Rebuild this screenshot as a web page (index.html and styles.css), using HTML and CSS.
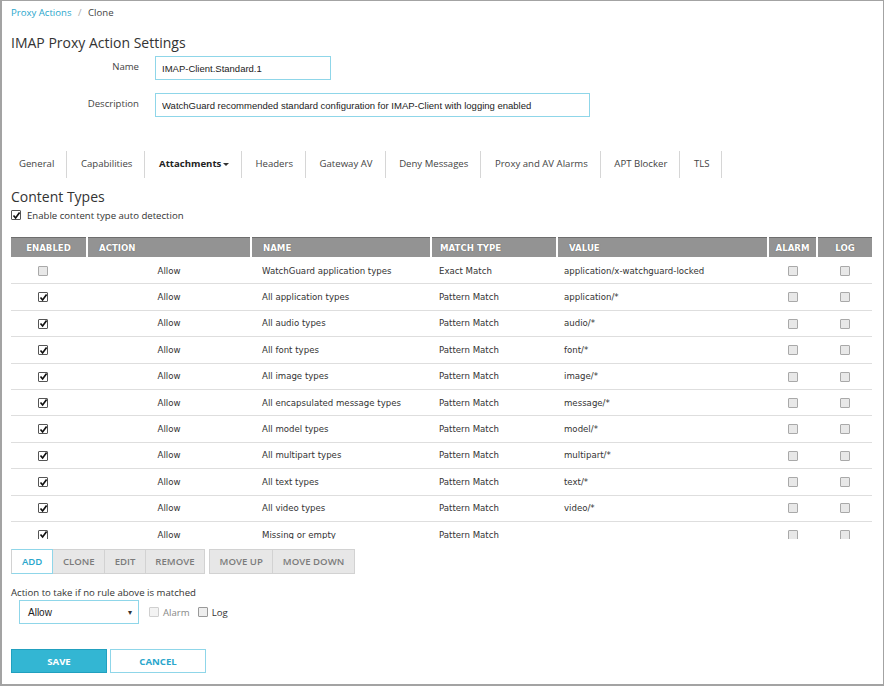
FILE: index.html
```html
<!DOCTYPE html>
<html lang="en">
<head>
    <meta charset="UTF-8">
    <title>IMAP Proxy Action Settings</title>
    <link rel="stylesheet" href="styles.css">
</head>
<body>
    <div class="page">
        <div class="crumbs">
            <a href="#">Proxy Actions</a>
            <span class="sep">/</span>
            <span>Clone</span>
        </div>

        <h1>IMAP Proxy Action Settings</h1>

        <div class="form-row">
            <label for="name">Name</label>
            <input type="text" id="name" class="name-input" value="IMAP-Client.Standard.1">
        </div>
        <div class="form-row">
            <label for="desc">Description</label>
            <input type="text" id="desc" class="desc-input" value="WatchGuard recommended standard configuration for IMAP-Client with logging enabled">
        </div>

        <ul class="tabs">
            <li>General</li>
            <li>Capabilities</li>
            <li class="active">Attachments <span class="caret"></span></li>
            <li>Headers</li>
            <li>Gateway AV</li>
            <li>Deny Messages</li>
            <li>Proxy and AV Alarms</li>
            <li>APT Blocker</li>
            <li>TLS</li>
        </ul>

        <h2>Content Types</h2>
        <div class="check-line">
            <span class="cb on"><svg width="9" height="9" viewBox="0 0 9 9"><path d="M1.5 4.5 L3.6 7 L7.6 1.6" stroke="#111" stroke-width="1.7" fill="none"/></svg></span>
            <span>Enable content type auto detection</span>
        </div>

        <table class="grid head">
            <colgroup>
                <col class="c-en"><col class="c-act"><col class="c-name"><col class="c-match"><col class="c-val"><col class="c-alarm"><col class="c-log">
            </colgroup>
            <tr>
                <th class="center">ENABLED</th>
                <th>ACTION</th>
                <th>NAME</th>
                <th class="pad-s">MATCH TYPE</th>
                <th>VALUE</th>
                <th class="center">ALARM</th>
                <th class="center">LOG</th>
            </tr>
        </table>
        <div class="grid-body">
            <table class="grid" id="rules">
                <colgroup>
                    <col class="c-en"><col class="c-act"><col class="c-name"><col class="c-match"><col class="c-val"><col class="c-alarm"><col class="c-log">
                </colgroup>
            </table>
        </div>

        <div class="toolbar">
            <div class="btn-group">
                <button class="active">ADD</button>
                <button>CLONE</button>
                <button>EDIT</button>
                <button>REMOVE</button>
            </div>
            <div class="btn-group">
                <button>MOVE UP</button>
                <button>MOVE DOWN</button>
            </div>
        </div>

        <div class="default-action">
            <div class="default-label">Action to take if no rule above is matched</div>
            <div class="default-row">
                <div class="select">Allow <span class="arrow">&#9662;</span></div>
                <span class="cb off dim"></span><span class="dim-text">Alarm</span>
                <span class="cb off log-cb"></span><span>Log</span>
            </div>
        </div>

        <div class="actions">
            <button class="save">SAVE</button>
            <button class="cancel">CANCEL</button>
        </div>
    </div>

    <script>
        const rules = [
            [false, 'WatchGuard application types', 'Exact Match', 'application/x-watchguard-locked'],
            [true, 'All application types', 'Pattern Match', 'application/*'],
            [true, 'All audio types', 'Pattern Match', 'audio/*'],
            [true, 'All font types', 'Pattern Match', 'font/*'],
            [true, 'All image types', 'Pattern Match', 'image/*'],
            [true, 'All encapsulated message types', 'Pattern Match', 'message/*'],
            [true, 'All model types', 'Pattern Match', 'model/*'],
            [true, 'All multipart types', 'Pattern Match', 'multipart/*'],
            [true, 'All text types', 'Pattern Match', 'text/*'],
            [true, 'All video types', 'Pattern Match', 'video/*'],
            [true, 'Missing or empty', 'Pattern Match', '']
        ];

        const checked = '<span class="cb on"><svg width="9" height="9" viewBox="0 0 9 9"><path d="M1.5 4.5 L3.6 7 L7.6 1.6" stroke="#111" stroke-width="1.7" fill="none"/></svg></span>';
        const unchecked = '<span class="cb off"></span>';

        const table = document.getElementById('rules');
        rules.forEach(function (r) {
            const row = table.insertRow();
            row.innerHTML =
                '<td class="center en">' + (r[0] ? checked : unchecked) + '</td>' +
                '<td class="center">Allow</td>' +
                '<td>' + r[1] + '</td>' +
                '<td class="pad-s">' + r[2] + '</td>' +
                '<td class="pad-v">' + r[3] + '</td>' +
                '<td class="center">' + unchecked + '</td>' +
                '<td class="center">' + unchecked + '</td>';
        });
    </script>
</body>
</html>
```

FILE: styles.css
```css
body {
    margin: 0;
    font-family: "Open Sans", Arial, sans-serif;
    color: #333;
    background: #fff;
}
.page {
    box-sizing: border-box;
    width: 884px;
    height: 686px;
    border: 1px solid #a3a3a3;
    border-left-width: 2px;
    border-bottom-width: 2px;
    padding: 0 0 0 9px;
    overflow: hidden;
}
.crumbs {
    font-size: 9.6px;
    padding-top: 5px;
    height: 16px;
    color: #444;
}
.crumbs a {
    color: #2aa6cc;
    text-decoration: none;
}
.crumbs .sep {
    color: #aaa;
    margin: 0 4px;
}
h1 {
    font-size: 14px;
    font-weight: 400;
    color: #333;
    margin: 12px 0 0 0;
    line-height: 18px;
}
h2 {
    font-size: 14px;
    font-weight: 400;
    color: #333;
    margin: 10px 0 0 0;
    line-height: 18px;
}
.form-row {
    display: grid;
    grid-template-columns: 128px auto;
    column-gap: 16px;
    align-items: center;
    margin-top: 4px;
}
.form-row + .form-row {
    margin-top: 13px;
}
.form-row label {
    text-align: right;
    font-size: 9.6px;
    color: #444;
    align-self: start;
    padding-top: 4px;
}
.form-row input {
    box-sizing: border-box;
    height: 24px;
    border: 1px solid #8fd6e9;
    padding: 0 6px;
    font-family: "Liberation Sans", Arial, sans-serif;
    font-size: 9.5px;
    color: #222;
    outline: none;
}
.name-input {
    width: 176px;
}
.desc-input {
    width: 435px;
}
.tabs {
    list-style: none;
    display: flex;
    margin: 34px 0 0 0;
    padding: 0;
    height: 27px;
}
.tabs li {
    font-size: 9.6px;
    color: #444;
    padding: 0 12px 0 13.6px;
    border-right: 1px solid #d6d6d6;
    line-height: 26px;
}
.tabs li:first-child {
    padding-left: 8px;
}
.tabs li.active {
    font-weight: 700;
    color: #222;
}
.caret {
    display: inline-block;
    width: 0;
    height: 0;
    border-left: 3px solid transparent;
    border-right: 3px solid transparent;
    border-top: 3px solid #333;
    vertical-align: middle;
    margin-left: -1px;
}
.check-line {
    display: flex;
    align-items: center;
    font-size: 9.6px;
    color: #333;
    margin-top: 1px;
    height: 16px;
}
.check-line .cb {
    margin: 0 6px 0 0;
}
.cb {
    box-sizing: border-box;
    display: inline-block;
    width: 10px;
    height: 10px;
    border: 1px solid #8c8c8c;
    border-radius: 1px;
    vertical-align: middle;
}
.cb svg {
    display: block;
    margin: -0.5px 0 0 -0.5px;
}
.cb.on {
    background: #fff;
    border-color: #555;
}
.cb.off {
    background: #e8e8e8;
    border-color: #a9a9a9;
}
.grid {
    border-collapse: collapse;
    table-layout: fixed;
    width: 861px;
}
.c-en { width: 76px; }
.c-act { width: 164px; }
.c-name { width: 180px; }
.c-match { width: 126px; }
.c-val { width: 211px; }
.c-alarm { width: 49px; }
.c-log { width: 55px; }
.head {
    margin-top: 14px;
}
.head th {
    background: #939393;
    border-top: 1px solid #6e6e6e;
    border-left: 2px solid #fff;
    height: 19px;
    padding: 0 0 0 11px;
    text-align: left;
    font-family: "DejaVu Sans", Verdana, sans-serif;
    font-size: 8.6px;
    font-weight: 700;
    color: #fff;
    text-shadow: 0 0 1px #555;
}
.head th:first-child {
    border-left: none;
}
.head th.center {
    text-align: center;
    padding: 0;
}
.head th.pad-s {
    padding-left: 8px;
}
.grid-body {
    box-sizing: border-box;
    height: 282px;
    padding-top: 1px;
    overflow: hidden;
}
.grid-body td {
    height: 25.4px;
    border-bottom: 1px solid #dedede;
    padding: 0 0 0 11px;
    font-family: "DejaVu Sans", Verdana, sans-serif;
    font-size: 8.6px;
    color: #333;
    white-space: nowrap;
}
.grid-body td.center {
    text-align: center;
    padding: 0;
}
.grid-body td.en {
    padding-right: 12px;
}
.grid-body td.pad-s {
    padding-left: 8px;
}
.grid-body td.pad-v {
    padding-left: 7px;
}
.toolbar {
    display: flex;
    gap: 4px;
    margin: 10px 0 0 0;
}
.btn-group {
    display: flex;
}
.toolbar button {
    box-sizing: border-box;
    height: 25px;
    padding: 0 9.5px;
    background: #e7e7e7;
    border: 1px solid #d2d2d2;
    border-left: none;
    font-family: "Open Sans", Arial, sans-serif;
    font-size: 9.6px;
    font-weight: 600;
    color: #7b7b7b;
}
.toolbar .btn-group button:first-child {
    border-left: 1px solid #d2d2d2;
}
.toolbar button.active {
    background: #fff;
    color: #2aa6cc;
    border: 1px solid #8fd6e9;
    padding: 0 10px;
}
.default-action {
    margin: 12px 0 0 0;
    font-size: 9.6px;
    color: #333;
}
.default-row {
    display: flex;
    align-items: center;
    margin-top: 1px;
}
.select {
    box-sizing: border-box;
    width: 120px;
    height: 24px;
    margin-left: 8px;
    border: 1px solid #8fd6e9;
    display: flex;
    align-items: center;
    justify-content: space-between;
    padding: 0 6px 0 8px;
    font-family: "Liberation Sans", Arial, sans-serif;
    font-size: 10px;
    color: #222;
}
.arrow {
    font-size: 8px;
    color: #333;
}
.default-row .cb {
    margin: 0 4px 0 10px;
}
.default-row .cb.dim {
    background: #f3f3f3;
    border-color: #cfcfcf;
}
.default-row .log-cb {
    margin-left: 8px;
    background: #eee;
    border-color: #999;
}
.dim-text {
    color: #888;
}
.actions {
    display: flex;
    gap: 3px;
    margin: 25px 0 0 0;
}
.actions button {
    box-sizing: border-box;
    width: 96px;
    height: 24px;
    font-family: "Open Sans", Arial, sans-serif;
    font-size: 9.6px;
    font-weight: 700;
}
.save {
    background: #33b6d3;
    border: 1px solid #21a0bf;
    color: #fff;
}
.cancel {
    background: #fff;
    border: 1px solid #8fd6e9;
    color: #2aa6cc;
}
```
